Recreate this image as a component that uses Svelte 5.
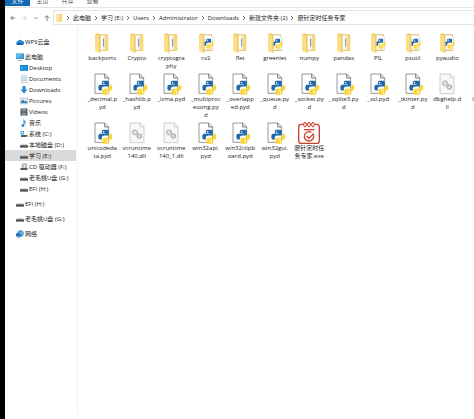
<script>
	const tabs = ['文件', '主页', '共享', '查看'];
	const path = ['此电脑', '学习 (E:)', 'Users', 'Administrator', 'Downloads', '新建文件夹 (2)', '磨针定时任务专家'];

	const groups = [
		[{ name: 'WPS云盘', icon: 'cloud' }],
		[
			{ name: '此电脑', icon: 'pc' },
			{ name: 'Desktop', icon: 'desktop', child: true },
			{ name: 'Documents', icon: 'doc', child: true },
			{ name: 'Downloads', icon: 'download', child: true },
			{ name: 'Pictures', icon: 'picture', child: true },
			{ name: 'Videos', icon: 'video', child: true },
			{ name: '音乐', icon: 'music', child: true },
			{ name: '系统 (C:)', icon: 'system', child: true },
			{ name: '本地磁盘 (D:)', icon: 'drive', child: true },
			{ name: '学习 (E:)', icon: 'drive', child: true },
			{ name: 'CD 驱动器 (F:)', icon: 'cd', child: true },
			{ name: '老毛桃U盘 (G:)', icon: 'drive', child: true },
			{ name: 'EFI (H:)', icon: 'drive', child: true }
		],
		[{ name: 'EFI (H:)', icon: 'drive' }],
		[{ name: '老毛桃U盘 (G:)', icon: 'drive' }],
		[{ name: '网络', icon: 'network' }]
	];

	// every label is broken the way the icon view wraps it
	const rows = [
		[
			['folder', 'backports'],
			['folder', 'Crypto'],
			['folder', 'cryptogra\nphy'],
			['pyfolder', 'cv2'],
			['folder', 'flet'],
			['pyfolder', 'greenlet'],
			['folder', 'numpy'],
			['folder', 'pandas'],
			['pyfolder', 'PIL'],
			['pyfolder', 'psutil'],
			['pyfolder', 'pyaudio']
		],
		[
			['pyd', '_decimal.p\nyd'],
			['pyd', '_hashlib.p\nyd'],
			['pyd', '_lzma.pyd'],
			['pyd', '_multiproc\nessing.py\nd'],
			['pyd', '_overlapp\ned.pyd'],
			['pyd', '_queue.py\nd'],
			['pyd', '_socket.py\nd'],
			['pyd', '_sqlite3.py\nd'],
			['pyd', '_ssl.pyd'],
			['pyd', '_tkinter.py\nd'],
			['dll', 'dbghelp.d\nll'],
			['dll', 'libffi-7.\ndll']
		],
		[
			['pyd', 'unicodeda\nta.pyd'],
			['dll', 'vcruntime\n140.dll'],
			['dll', 'vcruntime\n140_1.dll'],
			['pyd', 'win32api.\npyd'],
			['pyd', 'win32clipb\noard.pyd'],
			['pyd', 'win32gui.\npyd'],
			['app', '磨针定时任\n务专家.exe']
		]
	];

	let selected = $state('学习 (E:)');
</script>

{#snippet python()}
	<path d="M15 0H10C7 0 6 1 6 3v3h7v1H3C1 7 0 9 0 12s1 5 3 5h3v-3c0-2 1-4 4-4h5c2 0 3-1 3-3V3c0-2-1-3-3-3z" fill="#2069a8" />
	<path d="M10 24h5c3 0 4-1 4-3v-3h-7v-1h9c2 0 3-2 3-5s-1-5-3-5h-2v3c0 2-1 4-4 4h-5c-2 0-3 1-3 3v4c0 2 1 3 3 3z" fill="#fbd634" />
	<circle cx="9" cy="3.500" r="1.300" fill="#fff" />
	<circle cx="16" cy="20.500" r="1.300" fill="#fff" />
{/snippet}

{#snippet navIcon(kind)}
	<svg class="nav-icon" viewBox="0 0 16 16" aria-hidden="true">
		{#if kind === 'cloud'}
			<path d="M4 14a4 4 0 0 1-.5-7.800A5 5 0 0 1 12.500 6 4 4 0 0 1 12 14z" fill="#2a8ad8" />
			<path d="M1 11a3 3 0 0 0 3 3h8a4 4 0 0 0 3.500-3.500C12 13 8 8 1 11z" fill="#155da8" />
		{:else if kind === 'pc'}
			<path d="M0 1h16v11H0z" fill="#3a78a8" />
			<path d="M1 2h14v9H1z" fill="#35a8ea" />
			<path d="M1 2h9L5 11H1z" fill="#66c1f2" />
			<path d="M3 14h10v1H3z" fill="#567" />
		{:else if kind === 'desktop'}
			<path d="M0 2h16v12H0z" fill="#1273bd" />
			<path d="M1 3h14v8H1z" fill="#1a95e2" />
			<path d="M2 5h2v2H2zM2 8h2v2H2zM1 12h14v1H1z" fill="#7fd0f8" />
		{:else if kind === 'doc'}
			<path d="M3 1h8l3 3v11H3z" fill="#f5f9fc" stroke="#92a7b6" />
			<path d="M5 5h6M5 8h7M5 11h7" stroke="#4c9bcf" />
		{:else if kind === 'download'}
			<path d="M5 0h6v7h4l-7 8-7-8h4z" fill="#2488cf" />
		{:else if kind === 'picture'}
			<path d="M.5 2.500h15v11H.5z" fill="#e9f5fb" stroke="#768b99" />
			<path d="M2 12V9l4-4 4 4 2-2 2 2v3z" fill="#3a87b5" />
		{:else if kind === 'video'}
			<path d="M1 1h14v14H1z" fill="#444b50" />
			<path d="M4 2h8v5H4zM4 9h8v5H4z" fill="#7e95a3" />
			<path d="M2 2v12M14 2v12" stroke="#ddd" stroke-dasharray="2 2" />
		{:else if kind === 'music'}
			<path d="M7 0c1 4 6 4 5 10-1-3-2-3-3-4v6c0 5-7 4-6 1 0-2 2-3 4-2z" fill="#1787cf" />
		{:else if kind === 'system'}
			<path d="M1 2h3v3H1zM5 2h3v3H5zM1 6h3v3H1zM5 6h3v3H5z" fill="#27a3e0" />
			<path d="M2 10h13v4H2z" fill="#565c60" />
			<path d="M12 12h2v1h-2z" fill="#8df08b" />
		{:else if kind === 'cd'}
			<ellipse cx="9" cy="6" rx="5" ry="5" fill="#c5ccd0" stroke="#788086" />
			<circle cx="9" cy="6" r="1.500" fill="#fff" />
			<path d="M1 10h14v4H1z" fill="#50575b" />
		{:else if kind === 'network'}
			<circle cx="9" cy="7" r="6.500" fill="#3b94d1" />
			<path d="M5 3c4 1 7 4 9 8M3 9c5 1 8-2 10-6" stroke="#b9e2f8" fill="none" />
			<path d="M0 7h9v6H0z" fill="#1c70b4" />
			<path d="M2 14h6v1H2z" fill="#4a6275" />
		{:else}
			<path d="M2 7h12l2 2v4H0V9z" fill="#a5a9ab" />
			<path d="M0 9h16v4H0z" fill="#4a4e51" />
		{/if}
	</svg>
{/snippet}

{#snippet fileIcon(kind)}
	<svg class="file-icon" viewBox="0 0 66 66" aria-hidden="true">
		{#if kind === 'folder' || kind === 'pyfolder'}
			<path d="M12 7l8-3 7 3h24v50H12z" fill="#f0cb62" />
			{#if kind === 'pyfolder'}
				<path d="M26 9h20l7 7v38H26z" fill="#fff" stroke="#999" />
				<g transform="translate(26 20) scale(1.25)">{@render python()}</g>
			{:else}
				<path d="M28 10h14v44H28z" fill="#fff" stroke="#d6cda8" />
				<path d="M36 12h8v42h-8z" fill="#f3efe0" />
				<path d="M38 20v24" stroke="#6d8798" stroke-width="3" />
				<path d="M43 9h9v48h-9z" fill="#f6d672" />
			{/if}
			<path d="M12 7l16 6v50l-16-6z" fill="#fbdf88" />
			<path d="M24 12l4 1v50l-4-2z" fill="#efca66" />
		{:else if kind === 'pyd'}
			<path d="M12 3h30l11 11v47H12z" fill="#fff" stroke="#636363" stroke-width="2" />
			<path d="M41 3v12h12" fill="#eee" stroke="#444" stroke-width="2" />
			<g transform="translate(22 23) scale(1.75)">{@render python()}</g>
		{:else if kind === 'dll'}
			<path d="M12 3h32l10 10v49H12z" fill="#f8f8f8" stroke="#b8b8b8" stroke-width="2" />
			<path d="M43 3v11h11" fill="#fff" stroke="#b8b8b8" stroke-width="2" />
			<circle cx="27" cy="31" r="7" fill="#ddd" stroke="#b9b9b9" stroke-width="5" stroke-dasharray="4 1" />
			<circle cx="40" cy="42" r="6" fill="#ddd" stroke="#acacac" stroke-width="5" stroke-dasharray="4 1" />
			<circle cx="27" cy="31" r="2" fill="#fff" />
			<circle cx="40" cy="42" r="2" fill="#fff" />
		{:else}
			<g fill="none" stroke="#d0402e" stroke-width="4">
				<rect x="2" y="7" width="62" height="57" rx="8" fill="#fff" />
				<g fill="#fff" stroke-width="3">
					<ellipse cx="21" cy="8" rx="4" ry="7" />
					<ellipse cx="33" cy="8" rx="4" ry="7" />
					<ellipse cx="45" cy="8" rx="4" ry="7" />
				</g>
				<path d="M18 23h31" />
				<path d="M46 38a14 14 0 1 1-6-7M26 42l7 7 14-15" />
			</g>
		{/if}
	</svg>
{/snippet}

<div class="explorer">
	<div class="tabs">
		{#each tabs as tab, i}
			<button class="tab" class:file={i === 0}>{tab}</button>
		{/each}
	</div>

	<header class="toolbar">
		<div class="history">
			<button aria-label="后退"><svg viewBox="0 0 8 8"><path d="M7 4H1M4 1L1 4l3 3" /></svg></button>
			<button aria-label="前进" disabled><svg viewBox="0 0 8 8"><path d="M1 4h6M4 1l3 3-3 3" /></svg></button>
			<button aria-label="最近"><svg viewBox="0 0 8 8"><path d="M2 3l2 2 2-2" /></svg></button>
			<button aria-label="向上"><svg viewBox="0 0 8 8"><path d="M4 8V1M1 4l3-3 3 3" /></svg></button>
		</div>
		<nav class="address" aria-label="地址">
			<svg class="address-icon" viewBox="0 0 8 9" aria-hidden="true">
				<path d="M1 1h6v8H1z" fill="#f7d777" />
				<path d="M1 1h3v8H1z" fill="#fce6a0" />
			</svg>
			{#each path as part}
				<svg class="chevron" viewBox="0 0 10 8" aria-hidden="true"><path d="M4 2l2 2-2 2" /></svg>
				<button>{part}</button>
			{/each}
		</nav>
	</header>

	<div class="body">
		<nav class="sidebar" aria-label="导航窗格">
			{#each groups as group}
				<ul>
					{#each group as item}
						<li>
							<button
								class="place"
								class:child={item.child}
								class:selected={item.child && item.name === selected}
								onclick={() => (selected = item.name)}
							>
								{@render navIcon(item.icon)}
								<span>{item.name}</span>
							</button>
						</li>
					{/each}
				</ul>
			{/each}
		</nav>

		<main class="files">
			{#each rows as row}
				<div class="row">
					{#each row as [icon, name]}
						<button class="item">
							{@render fileIcon(icon)}
							<span class="name">{name}</span>
						</button>
					{/each}
				</div>
			{/each}
		</main>
	</div>
</div>

<style>
	:global(body) {
		background: #fff;
	}

	.explorer {
		box-sizing: border-box;
		min-height: 100vh;
		display: flex;
		flex-direction: column;
		border-left: 5px solid #000;
		overflow: hidden;
		font-family: 'Open Sans', 'Noto Sans CJK SC', sans-serif;
		font-size: 6px;
		line-height: 8px;
		color: #222;
	}

	button {
		padding: 0;
		border: 0;
		background: none;
		font: inherit;
		color: inherit;
		white-space: nowrap;
	}

	/* the tab strip runs off the top of the window */
	.tabs {
		display: flex;
		height: 11px;
		margin-top: -5px;
		padding-bottom: 1px;
		border-bottom: 1px solid #e6e6e6;
	}
	.tab {
		width: 25px;
		color: #555;
	}
	.tab.file {
		background: #1467b3;
		color: #fff;
	}

	.toolbar {
		display: flex;
		align-items: center;
		padding-top: 2px;
	}
	.history {
		display: flex;
		justify-content: space-between;
		width: 40px;
		padding: 0 3px 0 5px;
	}
	.history svg {
		display: block;
		width: 6px;
		height: 6px;
		fill: none;
		stroke: #555;
	}
	.history button:disabled {
		opacity: 0.3;
	}
	.address {
		flex: 1;
		display: flex;
		align-items: center;
		height: 13px;
		padding-left: 1px;
		border: 1px solid #e4e4e4;
		border-right: 0;
	}
	.address-icon {
		width: 8px;
		height: 9px;
	}
	.chevron {
		width: 10px;
		height: 8px;
		fill: none;
		stroke: #777;
	}

	.body {
		flex: 1;
		display: flex;
	}
	.sidebar {
		width: 71px;
		padding-top: 11px;
		margin-bottom: 4px;
		border-right: 3px solid #fafafa;
	}
	ul {
		list-style: none;
		margin: 0 0 4px;
		padding: 0;
	}
	.place {
		display: flex;
		align-items: center;
		gap: 1px;
		width: 100%;
		height: 11px;
		padding-left: 11px;
	}
	.place.child {
		padding-left: 15px;
	}
	.place.selected {
		background: #d9d9d9;
	}
	.nav-icon {
		flex: none;
		width: 8px;
		height: 8px;
	}

	/* the last column is only partly in view */
	.files {
		flex: 1;
		min-width: 0;
		display: flex;
		flex-direction: column;
		gap: 3px;
		margin-right: -25px;
		padding: 7px 0 0 6px;
	}
	.row {
		display: grid;
		grid-template-columns: repeat(12, minmax(0, 1fr));
	}
	.item {
		display: flex;
		flex-direction: column;
		align-items: center;
	}
	.file-icon {
		width: 22px;
		height: 22px;
	}
	.name {
		white-space: pre;
		text-align: center;
	}
</style>
